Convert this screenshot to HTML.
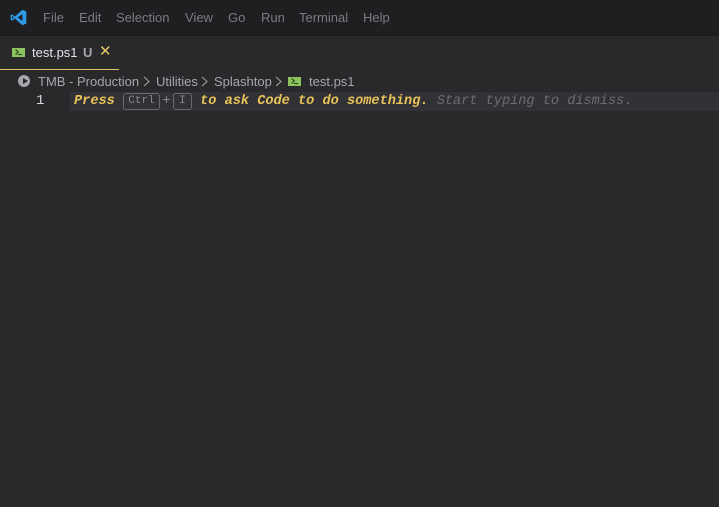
<!DOCTYPE html>
<html><head><style>
body{margin:0;width:719px;height:507px;background:#29282b;font-family:"Liberation Sans",sans-serif;overflow:hidden;position:relative}
.title{position:absolute;left:0;top:0;width:719px;height:35px;background:#1f1e21;border-bottom:1px solid #1a191c;color:#7d7b80;font-size:13px}
.title span{position:absolute;top:10px}
.tabs{position:absolute;top:36px;left:0;width:719px;height:34px;background:#29282b}
.tab{position:absolute;left:0;top:0;width:119px;height:33px;background:#29282b;border-bottom:1px solid #e3c86a}
.ico{position:absolute;width:13px;height:9px;background:#8cc460}
.ico:before{content:"";position:absolute;left:2px;top:2px;width:3px;height:3px;border-right:1px solid #1e3a10;border-bottom:1px solid #1e3a10;transform:rotate(-45deg)}
.ico:after{content:"";position:absolute;left:6px;top:6px;width:4px;height:1px;background:#1e3a10}
.crumb{position:absolute;top:74px;font-size:13px;color:#a8a6aa}
.chev{position:absolute;top:76px}
.hl{position:absolute;left:70px;top:92px;width:649px;height:19px;background:#323135}
.code{position:absolute;top:93px;left:74px;font-family:"Liberation Mono",monospace;font-size:13.6px;font-style:italic;font-weight:bold;color:#e8c35a;white-space:pre}
.kbd{display:inline-block;box-sizing:border-box;text-align:center;border:1px solid #6a686c;border-radius:3px;color:#8a888c;font-weight:normal;font-style:normal;font-size:11px;line-height:15px;vertical-align:1px}
</style></head><body>
<div class="title">
<svg style="position:absolute;left:10px;top:9px" width="17" height="17" viewBox="0 0 24 24"><path d="M17.5 1 L23 3.5 V20.5 L17.5 23 L7 13.5 L3 16.5 L1 15.5 V8.5 L3 7.5 L7 10.5 Z M17.5 7 L11 12 L17.5 17 Z M3 9.5 V14.5 L5.5 12 Z" fill="#2f9ae6"/></svg>
<span style="left:43px">File</span><span style="left:79px">Edit</span><span style="left:116px">Selection</span><span style="left:185px">View</span><span style="left:228px">Go</span><span style="left:261px">Run</span><span style="left:299px">Terminal</span><span style="left:363px">Help</span>
</div>
<div class="tabs"><div class="tab">
<div class="ico" style="left:12px;top:12px"></div>
<span style="position:absolute;left:32px;top:9px;font-size:13px;color:#e6e4e8">test.ps1</span>
<span style="position:absolute;left:83px;top:9px;font-size:13px;color:#a8a6aa;font-weight:bold">U</span>
<span style="position:absolute;left:99px;top:6px;font-size:15px;color:#e3c86a">✕</span>
</div></div>
<div style="position:absolute;left:18px;top:75px;width:12px;height:12px;border-radius:50%;background:#a8a6aa"></div>
<div style="position:absolute;left:23px;top:78px;border-left:5px solid #29282b;border-top:3px solid transparent;border-bottom:3px solid transparent"></div>
<div class="crumb" style="left:38px">TMB - Production</div>
<svg class="chev" style="left:143px" width="7" height="11" viewBox="0 0 7 11"><path d="M1 1 L6 5.5 L1 10" fill="none" stroke="#a8a6aa" stroke-width="1"/></svg>
<div class="crumb" style="left:156px">Utilities</div>
<svg class="chev" style="left:201px" width="7" height="11" viewBox="0 0 7 11"><path d="M1 1 L6 5.5 L1 10" fill="none" stroke="#a8a6aa" stroke-width="1"/></svg>
<div class="crumb" style="left:214px">Splashtop</div>
<svg class="chev" style="left:275px" width="7" height="11" viewBox="0 0 7 11"><path d="M1 1 L6 5.5 L1 10" fill="none" stroke="#a8a6aa" stroke-width="1"/></svg>
<div class="ico" style="left:288px;top:77px"></div>
<div class="crumb" style="left:309px">test.ps1</div>
<div class="hl"></div>
<div style="position:absolute;left:36px;top:93px;font-size:14px;color:#d8d6da;font-family:'Liberation Mono',monospace">1</div>
<div class="code">Press <span class="kbd" style="width:37px">Ctrl</span><span style="display:inline-block;width:13px;text-align:center;color:#8a888c;font-weight:normal;font-style:normal">+</span><span class="kbd" style="width:19px">I</span> to ask Code to do something. <span style="color:#6e6c70;font-weight:normal">Start typing to dismiss.</span></div>
</body></html>
